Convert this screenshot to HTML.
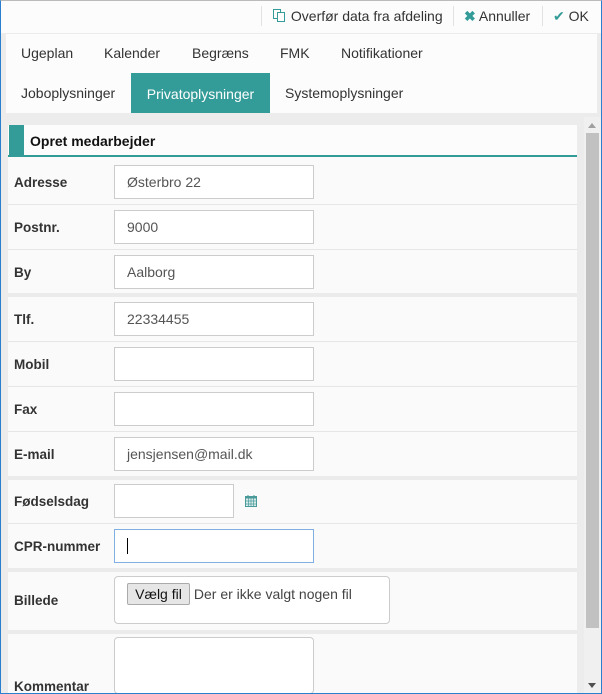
<!DOCTYPE html>
<html><head><meta charset="utf-8"><style>
*{box-sizing:border-box;margin:0;padding:0}
html,body{width:602px;height:694px;overflow:hidden}
body{background:#ececec;font-family:"Liberation Sans",Arial,sans-serif;position:relative}
.a{position:absolute;white-space:nowrap}
.frame{left:0;top:0;width:602px;height:694px;border:1px solid #2b7fd0;border-top:1px solid #bbb}
.tb{left:1px;top:1px;width:600px;height:32px;background:#fcfcfc}
.tbi{top:8px;font-size:14px;color:#333}
.sep{top:6px;width:1px;height:20px;background:#e2e2e2}
.tabs{left:6px;top:34px;width:591px;height:79px;background:#fcfcfc}
.tab{font-size:14px;color:#333}
.act{left:131px;top:73px;width:139px;height:40px;background:#339b98;color:#fff;font-size:14px;padding-top:13px;text-align:center}
.panel{left:8px;top:125px;width:569px;height:569px;background:#fafafa}
.hd{left:8px;top:125px;width:569px;height:32px;border-bottom:2px solid #339b98;background:#fcfcfc}
.hbar{left:9px;top:125px;width:15px;height:32px;background:#339b98}
.ht{left:30px;top:133px;font-size:14px;font-weight:bold;color:#111}
.lbl{left:14px;font-size:13.5px;font-weight:bold;color:#333}
.inp{left:114px;width:200px;height:34px;background:#fff;border:1px solid #ccc;font-size:14px;color:#555;padding:8px 12px}
.hl{left:8px;width:569px;height:1px;background:#e6e6e6}
.th{left:8px;width:569px;height:4px;background:#ebebeb}
.sb{left:584px;top:117px;width:17px;height:576px;background:#f0f0f0}
.thumb{left:586px;top:133px;width:13px;height:495px;background:#c1c1c1}
</style></head><body>
<div class="a tb"></div>
<div class="a sep" style="left:261px"></div>
<div class="a tbi" style="left:272px"><svg width="15" height="15" viewBox="0 0 15 15" style="vertical-align:-2px"><rect x="1.5" y="1.5" width="7" height="9" fill="none" stroke="#339b98"/><rect x="5.5" y="4.5" width="7" height="9" fill="#fff" stroke="#339b98"/></svg> Overfør data fra afdeling</div>
<div class="a sep" style="left:453px"></div>
<div class="a tbi" style="left:464px"><span style="color:#339b98;font-weight:bold">✖</span> Annuller</div>
<div class="a sep" style="left:542px"></div>
<div class="a tbi" style="left:553px"><span style="color:#339b98">✔</span> OK</div>
<div class="a tabs"></div>
<div class="a tab" style="left:21px;top:45px">Ugeplan</div>
<div class="a tab" style="left:104px;top:45px">Kalender</div>
<div class="a tab" style="left:192px;top:45px">Begræns</div>
<div class="a tab" style="left:280px;top:45px">FMK</div>
<div class="a tab" style="left:341px;top:45px">Notifikationer</div>
<div class="a tab" style="left:21px;top:85px">Joboplysninger</div>
<div class="a act">Privatoplysninger</div>
<div class="a tab" style="left:285px;top:85px">Systemoplysninger</div>
<div class="a panel"></div>
<div class="a hd"></div><div class="a hbar"></div>
<div class="a ht">Opret medarbejder</div>

<div class="a lbl" style="top:175px">Adresse</div><div class="a inp" style="top:165px">Østerbro 22</div>
<div class="a hl" style="top:204px"></div>
<div class="a lbl" style="top:220px">Postnr.</div><div class="a inp" style="top:210px">9000</div>
<div class="a hl" style="top:249px"></div>
<div class="a lbl" style="top:265px">By</div><div class="a inp" style="top:255px">Aalborg</div>
<div class="a th" style="top:293px"></div>
<div class="a lbl" style="top:312px">Tlf.</div><div class="a inp" style="top:302px">22334455</div>
<div class="a hl" style="top:341px"></div>
<div class="a lbl" style="top:357px">Mobil</div><div class="a inp" style="top:347px"></div>
<div class="a hl" style="top:386px"></div>
<div class="a lbl" style="top:402px">Fax</div><div class="a inp" style="top:392px"></div>
<div class="a hl" style="top:431px"></div>
<div class="a lbl" style="top:447px">E-mail</div><div class="a inp" style="top:437px">jensjensen@mail.dk</div>
<div class="a th" style="top:476px"></div>
<div class="a lbl" style="top:494px">Fødselsdag</div><div class="a inp" style="top:484px;width:120px"></div>
<svg class="a" style="left:245px;top:494px" width="12" height="13" viewBox="0 0 12 13"><rect x="0.5" y="2.5" width="11" height="10" fill="#d8ecec" stroke="#4a9a9a"/><rect x="0.5" y="2.5" width="11" height="2" fill="#4a9a9a"/><path d="M3 1v3M9 1v3" stroke="#4a9a9a"/><path d="M0.5 7h11M0.5 10h11M3.5 4.5v8M6 4.5v8M8.5 4.5v8" stroke="#4a9a9a" stroke-width="0.7"/></svg>
<div class="a hl" style="top:523px"></div>
<div class="a lbl" style="top:539px">CPR-nummer</div><div class="a inp" style="top:529px;border-color:#7fb0e0"><span style="display:inline-block;width:1px;height:16px;background:#000"></span></div>
<div class="a th" style="top:568px"></div>
<div class="a lbl" style="top:593px">Billede</div>
<div class="a inp" style="top:576px;width:276px;height:48px;border-radius:4px;padding:6px 12px;font-size:14px;color:#444"><span style="display:inline-block;width:63px;text-align:center;border:1px solid #aaa;background:#e6e6e6;padding:2px 0;color:#111;font-size:14px;border-radius:2px">Vælg fil</span> Der er ikke valgt nogen fil</div>
<div class="a th" style="top:630px"></div>
<div class="a lbl" style="top:679px">Kommentar</div>
<div class="a inp" style="top:637px;height:57px;border-radius:4px"></div>
<div class="a sb"></div><div class="a thumb"></div>
<div class="a" style="left:588px;top:123px;width:0;height:0;border:4px solid transparent;border-bottom:5px solid #a0a0a0;border-top:0"></div>
<div class="a" style="left:588px;top:683px;width:0;height:0;border:4px solid transparent;border-top:5px solid #505050;border-bottom:0"></div>
<div class="a frame"></div>
</body></html>
